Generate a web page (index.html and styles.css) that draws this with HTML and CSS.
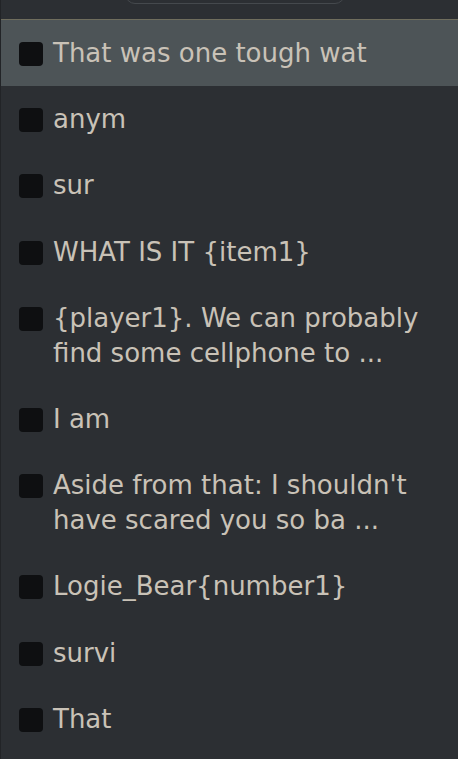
FILE: index.html
```html
<!DOCTYPE html>
<html lang="en">

<head>
    <meta charset="UTF-8">
    <meta name="viewport" content="width=device-width, initial-scale=1.0">
    <title>Dialogue List</title>
    <link rel="stylesheet" href="styles.css">
</head>

<body>
    <div class="panel">
        <div class="panel-top">
            <div class="tab"></div>
        </div>

        <ul class="lines">
            <li class="line selected"><span class="check"></span><span class="text">That was one tough wat</span></li>
            <li class="line"><span class="check"></span><span class="text">anym</span></li>
            <li class="line"><span class="check"></span><span class="text">sur</span></li>
            <li class="line"><span class="check"></span><span class="text">WHAT IS IT {item1}</span></li>
            <li class="line"><span class="check"></span><span class="text">{player1}. We can probably<br>find some cellphone to ...</span></li>
            <li class="line"><span class="check"></span><span class="text">I am</span></li>
            <li class="line"><span class="check"></span><span class="text">Aside from that: I shouldn't<br>have scared you so ba ...</span></li>
            <li class="line"><span class="check"></span><span class="text">Logie_Bear{number1}</span></li>
            <li class="line"><span class="check"></span><span class="text">survi</span></li>
            <li class="line"><span class="check"></span><span class="text">That</span></li>
        </ul>
    </div>
</body>

</html>
```

FILE: styles.css
```css
html,
body {
    margin: 0;
    height: 100%;
    background-color: #2c2f33;
}

body {
    font-family: 'DejaVu Sans', 'Open Sans', sans-serif;
    color: #c9c2b7;
    overflow: hidden;
}

.panel {
    min-height: 100%;
    border-left: 1px solid #222427;
}

.panel-top {
    height: 19px;
    overflow: hidden;
}

.tab {
    width: 218px;
    height: 20px;
    margin: -18px 0 0 124px;
    border: 1px solid #45494d;
    border-radius: 10px;
}

.lines {
    list-style: none;
    margin: 0;
    padding: 0;
}

.line {
    display: flex;
    align-items: flex-start;
    gap: 10px;
    padding: 16px 0 15.2px 18px;
    border-top: 1px solid transparent;
    margin-top: -1px;
}

.line:first-child {
    margin-top: 0;
}

.line.selected {
    background-color: #4d5457;
    border-top-color: #6f6d5d;
}

.check {
    flex: 0 0 auto;
    width: 24px;
    height: 24px;
    margin-top: 6px;
    border-radius: 4px;
    background-color: #0e0f11;
}

.text {
    font-size: 26px;
    line-height: 35px;
    white-space: nowrap;
}
```
